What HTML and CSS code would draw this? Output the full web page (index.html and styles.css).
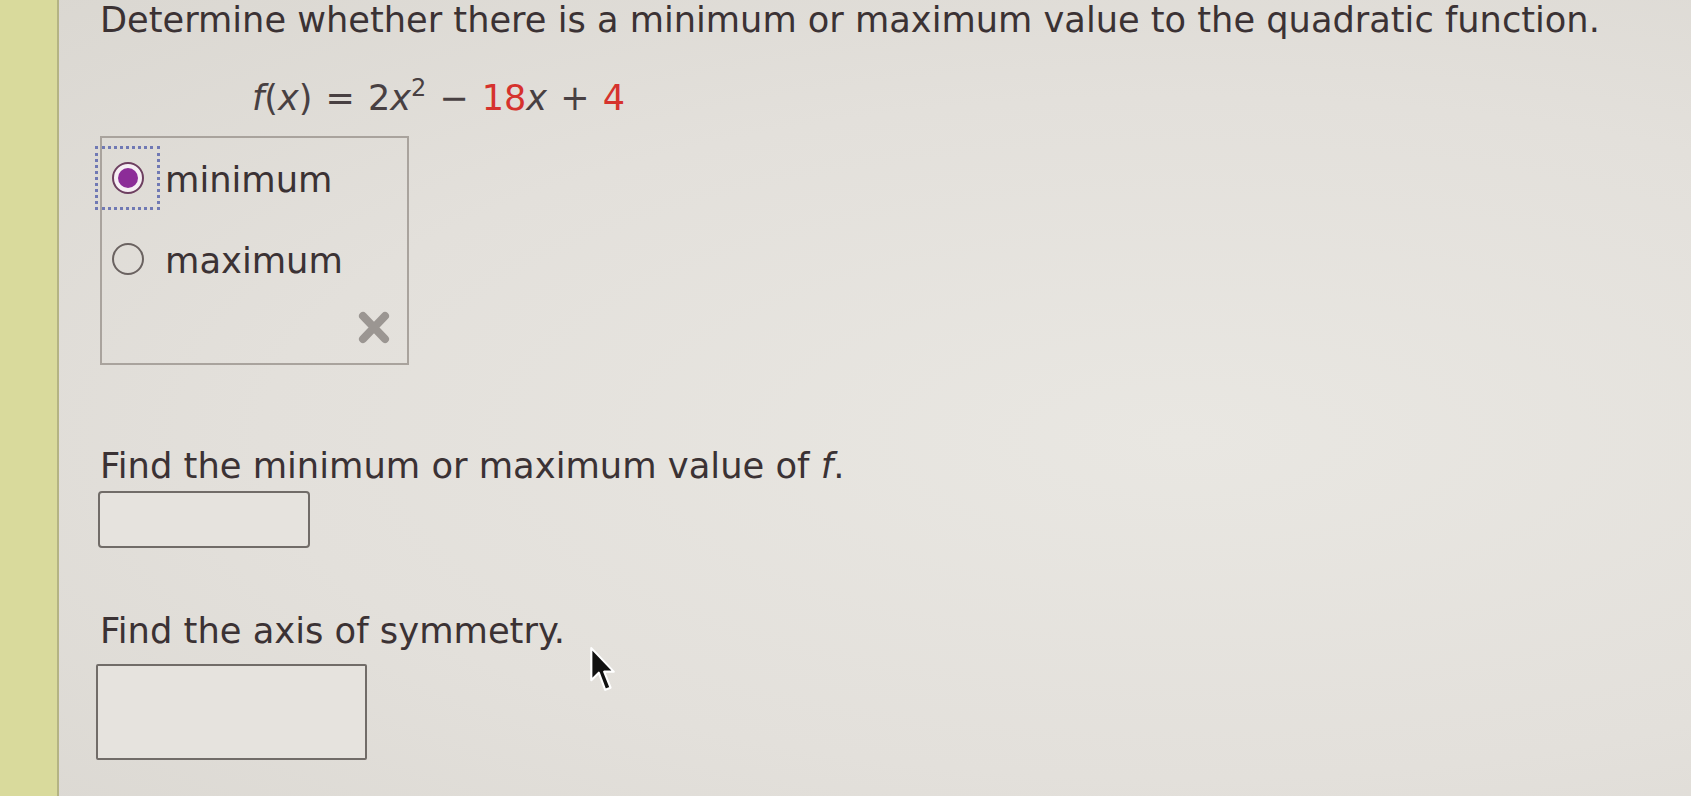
FILE: index.html
```html
<!DOCTYPE html>
<html lang="en">
<head>
<meta charset="utf-8">
<title>Quadratic function</title>
<link rel="stylesheet" href="styles.css">
</head>
<body>
<div class="page">
  <div class="strip"></div>
  <main class="content">
    <p class="heading">Determine whether there is a minimum or maximum value to the quadratic function.</p>
    <p class="equation"><span class="i">f</span>(<span class="i">x</span>) = 2<span class="i">x</span><sup>2</sup> − <span class="red">18</span><span class="i">x</span> + <span class="red">4</span></p>

    <div class="choices">
      <div class="choice">
        <span class="focus"><span class="radio radio-on"><span class="dot"></span></span></span>
        <span class="label">minimum</span>
      </div>
      <div class="choice">
        <span class="focus focus-off"><span class="radio"></span></span>
        <span class="label">maximum</span>
      </div>
      <div class="clear-row">
        <svg class="xicon" viewBox="0 0 32 33" width="32" height="33" aria-hidden="true">
          <path d="M5 5 L27 28 M27 5 L5 28" stroke="#9b9692" stroke-width="8" stroke-linecap="round" fill="none"/>
        </svg>
      </div>
    </div>

    <p class="question q1">Find the minimum or maximum value of <span class="i">f</span>.</p>
    <div class="answer a1"></div>

    <p class="question q2">Find the axis of symmetry.</p>
    <div class="answer a2"></div>
  </main>
</div>
<svg class="cursor" viewBox="0 0 24 44" width="26" height="47" aria-hidden="true">
  <path d="M2 2 L2 32 L9 25 L15 41 L20 39 L14 24 L23 24 Z" fill="#111" stroke="#fff" stroke-width="2" stroke-linejoin="round"/>
</svg>
</body>
</html>
```

FILE: styles.css
```css
html, body {
  margin: 0;
  padding: 0;
  height: 100%;
}

body {
  background:
    radial-gradient(ellipse at 70% 55%, #e9e7e2 0%, #e3e0db 55%, #dad7d1 100%);
  font-family: "DejaVu Sans", Verdana, sans-serif;
  color: #3b3234;
  overflow: hidden;
  position: relative;
}

.page {
  display: flex;
  min-height: 796px;
}

.strip {
  width: 57px;
  flex: none;
  background: #d9da9c;
  border-right: 2px solid #b4b384;
}

.content {
  flex: 1;
  padding-left: 41px;
}

p {
  margin: 0;
}

.heading {
  font-size: 35.2px;
  line-height: 30px;
  padding-top: 5px;
  white-space: nowrap;
}

.equation {
  font-size: 35px;
  line-height: 40px;
  margin-top: 43px;
  margin-left: 152px;
  word-spacing: 2px;
  color: #484042;
  white-space: pre;
}

.equation sup {
  font-size: 24px;
  line-height: 0;
  vertical-align: 14px;
}

.i {
  font-style: italic;
}

.red {
  color: #d6322d;
}

.choices {
  margin-top: 18px;
  width: 305px;
  border: 2px solid #a9a39d;
  padding-top: 8px;
  padding-bottom: 19px;
}

.choice {
  display: flex;
  align-items: center;
  height: 64px;
}

.choice + .choice {
  margin-top: 17px;
}

.focus {
  box-sizing: border-box;
  width: 65px;
  height: 64px;
  margin-left: -7px;
  border: 3px dotted #7079b4;
  display: flex;
  align-items: center;
  justify-content: center;
  flex: none;
}

.focus-off {
  border-color: transparent;
}

.radio {
  box-sizing: border-box;
  width: 32px;
  height: 32px;
  border-radius: 50%;
  border: 2px solid #6a6260;
  display: flex;
  align-items: center;
  justify-content: center;
}

.radio-on {
  border: 2.5px solid #6d3f60;
  background: #f6eef4;
}

.dot {
  width: 20px;
  height: 20px;
  border-radius: 50%;
  background: #8c2c98;
}

.label {
  font-size: 35.3px;
  line-height: 34px;
  padding-top: 4px;
  margin-left: 5px;
  color: #3b3234;
}

.clear-row {
  display: flex;
  justify-content: flex-end;
  margin-top: 20px;
  padding-right: 17px;
}

.xicon {
  display: block;
}

.question {
  font-size: 35.3px;
  line-height: 36px;
}

.q1 {
  margin-top: 83px;
}

.q2 {
  margin-top: 65px;
}

.answer {
  box-sizing: border-box;
  border: 2px solid #716c68;
  background: #e6e3de;
}

.a1 {
  width: 212px;
  height: 57px;
  margin-top: 7px;
  margin-left: -2px;
  border-radius: 4px;
}

.a2 {
  width: 271px;
  height: 96px;
  margin-top: 15px;
  margin-left: -4px;
  border-radius: 2px;
}

.cursor {
  position: absolute;
  left: 589px;
  top: 646px;
}
```
